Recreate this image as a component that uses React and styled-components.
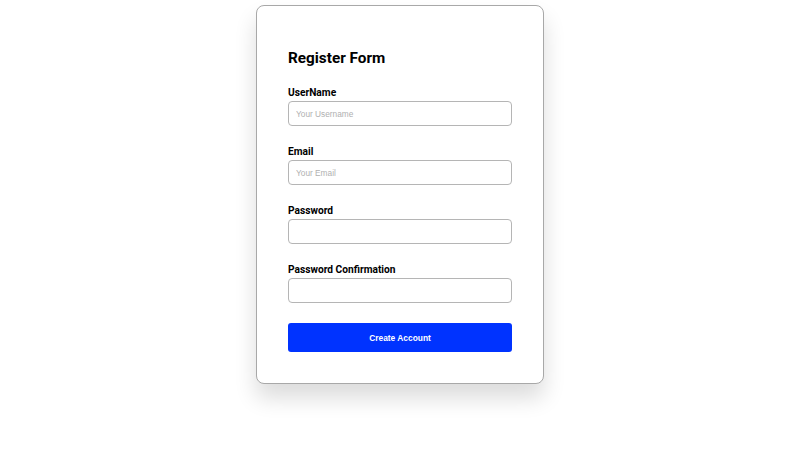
import React from 'react';
import styled, { createGlobalStyle } from 'styled-components';

const GlobalStyle = createGlobalStyle`
  body {
    margin: 0;
    background: #fff;
    font-family: Roboto, "Liberation Sans", sans-serif;
  }
`

const Page = styled.div`
  display: flex;
  justify-content: center;
  padding: 5px 0 40px;
`
const Card = styled.form`
  box-sizing: border-box;
  width: 288px;
  padding: 43px 31px 31px;
  border: 1px solid #a8a8a8;
  border-radius: 8px;
  background: #fff;
  box-shadow: 0 14px 22px rgba(0, 0, 0, 0.14);
  display: flex;
  flex-direction: column;
`
const Title = styled.h2`
  margin: 0 0 19px;
  font-size: 15.3px;
  line-height: 18px;
  font-weight: 700;
  color: #000;
`
const Field = styled.div`
  display: flex;
  flex-direction: column;
  margin-bottom: 19px;
`
const Label = styled.label`
  padding-top: 1px;
  margin-bottom: 2px;
  font-size: 10.2px;
  line-height: 12px;
  font-weight: 700;
  color: #000;
`
const Input = styled.input`
  box-sizing: border-box;
  height: 25px;
  padding: 0 7px;
  border: 1px solid #b5b5b5;
  border-radius: 4px;
  font-family: "Liberation Sans", Arial, sans-serif;
  font-size: 8.3px;
  &::placeholder {
    color: #b0b0b0;
  }
`
const Button = styled.button`
  margin-top: 1px;
  height: 29px;
  border: none;
  border-radius: 3px;
  background: #0033ff;
  color: #fff;
  font-family: "Liberation Sans", Arial, sans-serif;
  font-size: 8.4px;
  font-weight: 700;
`

const fields = [
  { label: 'UserName', type: 'text', placeholder: 'Your Username' },
  { label: 'Email', type: 'email', placeholder: 'Your Email' },
  { label: 'Password', type: 'password' },
  { label: 'Password Confirmation', type: 'password' },
];

export default function App() {
  return (
    <Page>
      <GlobalStyle />
      <Card onSubmit={(e) => e.preventDefault()}>
        <Title>Register Form</Title>
        {fields.map((f) => (
          <Field key={f.label}>
            <Label>{f.label}</Label>
            <Input type={f.type} placeholder={f.placeholder} />
          </Field>
        ))}
        <Button type="submit">Create Account</Button>
      </Card>
    </Page>
  );
}
